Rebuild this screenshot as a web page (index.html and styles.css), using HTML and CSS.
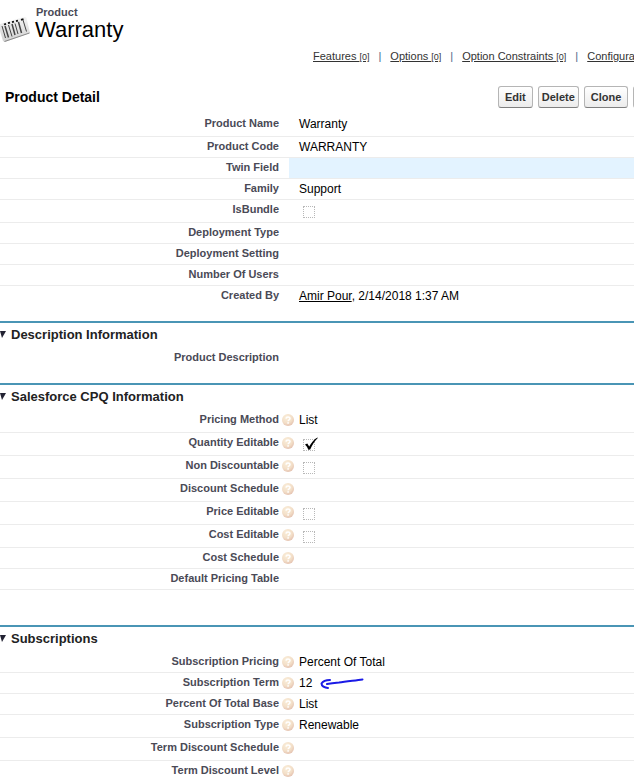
FILE: index.html
```html
<!DOCTYPE html>
<html lang="en">
<head>
<meta charset="utf-8">
<title>Product: Warranty</title>
<link rel="stylesheet" href="styles.css">
</head>
<body>
<svg class="defs" aria-hidden="true">
  <defs>
    <radialGradient id="help-fill" cx="0.4" cy="0.3" r="0.75">
      <stop offset="0" stop-color="#faeeda"/>
      <stop offset="0.6" stop-color="#f3dfc8"/>
      <stop offset="1" stop-color="#e3bfae"/>
    </radialGradient>
    <linearGradient id="tag-fill" x1="0" y1="0" x2="0" y2="1">
      <stop offset="0" stop-color="#f4f4f4"/>
      <stop offset="1" stop-color="#d0d0d0"/>
    </linearGradient>
  </defs>
  <symbol id="help" viewBox="0 0 12 12">
    <circle cx="6" cy="6" r="6" fill="url(#help-fill)"/>
    <path d="M4 4.6C4.1 2.5 8 2.5 8 4.6C8 5.9 6.1 5.8 6.1 7.3" fill="none" stroke="#fff" stroke-width="1.5"/>
    <rect x="5.3" y="8.2" width="1.6" height="1.5" fill="#fff"/>
  </symbol>
</svg>

<header class="page-head">
  <svg class="product-icon" viewBox="0 0 30 28" aria-hidden="true">
    <path d="M0 10L24 3Q26 2.500 26.500 4L30 19L5 28L3 27L0 17Z" fill="url(#tag-fill)"/>
    <path d="M4.500 27.500L29.500 19" stroke="#888" stroke-width="1"/>
    <path d="M2 12L5.500 24M8.500 11L12 22.500M15 9.500L18 20M23 6L26.500 17.500" stroke="#444" stroke-width="1"/>
    <path d="M5 12L8.500 23.500M12 10L15 21M18.500 8L21.500 19" stroke="#444" stroke-width="1.500"/>
    <path d="M4 10.500L6 9.800M8 9.200L10 8.700M12 8.200L14 7.700M16 7.200L18 6.700M21 5.800L23.500 5" stroke="#111" stroke-width="1.800"/>
  </svg>
  <div>
    <p class="kind">Product</p>
    <h1>Warranty</h1>
  </div>
</header>

<nav class="related" aria-label="Related lists">
  <a href="#">Features <span class="count">[0]</span></a><span class="bar">|</span>
  <a href="#">Options <span class="count">[0]</span></a><span class="bar">|</span>
  <a href="#">Option Constraints <span class="count">[0]</span></a><span class="bar">|</span>
  <a href="#">Configura</a>
</nav>

<main>
  <div class="toolbar">
    <h2>Product Detail</h2>
    <div class="actions">
      <button type="button">Edit</button>
      <button type="button" class="snug">Delete</button>
      <button type="button">Clone</button>
      <button type="button" aria-label="More actions"></button>
    </div>
  </div>

  <table class="fields">
    <tr class="tall"><th scope="row">Product Name</th><td>Warranty</td></tr>
    <tr><th scope="row">Product Code</th><td>WARRANTY</td></tr>
    <tr><th scope="row">Twin Field</th><td class="lit"></td></tr>
    <tr><th scope="row">Family</th><td>Support</td></tr>
    <tr class="tall"><th scope="row"><label for="bundle">IsBundle</label></th><td><span class="tick"><input type="checkbox" id="bundle" disabled></span></td></tr>
    <tr><th scope="row">Deployment Type</th><td></td></tr>
    <tr><th scope="row">Deployment Setting</th><td></td></tr>
    <tr><th scope="row">Number Of Users</th><td></td></tr>
    <tr class="last"><th scope="row">Created By</th><td><a href="#">Amir Pour</a>, 2/14/2018 1:37 AM</td></tr>
  </table>

  <section class="gap-medium">
    <h3><span class="twisty"></span>Description Information</h3>
    <table class="fields">
      <tr class="last"><th scope="row">Product Description</th><td></td></tr>
    </table>
  </section>

  <section class="gap-medium">
    <h3><span class="twisty"></span>Salesforce CPQ Information</h3>
    <table class="fields">
      <tr class="tall"><th scope="row">Pricing Method<svg class="help"><use href="#help"/></svg></th><td>List</td></tr>
      <tr class="tall"><th scope="row"><label for="quantity">Quantity Editable</label><svg class="help"><use href="#help"/></svg></th><td><span class="tick"><input type="checkbox" id="quantity" checked disabled><svg class="check" viewBox="0 0 14 14" aria-hidden="true"><path d="M1 7.500L3.300 6.500L5.200 9.500C7.500 5.500 10 2.200 13.500 0.500L13.800 1C10.500 4 8.200 8 6.200 12.500L4.300 12.700C3.500 10.500 2.500 9 1 7.500Z"/></svg></span></td></tr>
      <tr class="tall"><th scope="row"><label for="discount">Non Discountable</label><svg class="help"><use href="#help"/></svg></th><td><span class="tick"><input type="checkbox" id="discount" disabled></span></td></tr>
      <tr class="tall"><th scope="row">Discount Schedule<svg class="help"><use href="#help"/></svg></th><td></td></tr>
      <tr class="tall"><th scope="row"><label for="price">Price Editable</label><svg class="help"><use href="#help"/></svg></th><td><span class="tick"><input type="checkbox" id="price" disabled></span></td></tr>
      <tr class="tall"><th scope="row"><label for="cost">Cost Editable</label><svg class="help"><use href="#help"/></svg></th><td><span class="tick"><input type="checkbox" id="cost" disabled></span></td></tr>
      <tr><th scope="row">Cost Schedule<svg class="help"><use href="#help"/></svg></th><td></td></tr>
      <tr><th scope="row">Default Pricing Table</th><td></td></tr>
    </table>
  </section>

  <section class="gap-large">
    <h3><span class="twisty"></span>Subscriptions</h3>
    <table class="fields">
      <tr><th scope="row">Subscription Pricing<svg class="help"><use href="#help"/></svg></th><td>Percent Of Total</td></tr>
      <tr><th scope="row">Subscription Term<svg class="help"><use href="#help"/></svg></th><td><span class="marked">12<svg class="arrow" viewBox="0 0 44 14" aria-hidden="true"><path d="M42.500 2.500C35 3.500 26 4.500 19 5.500C14 6 10 6.500 7 7M10 3C7 3 3 4 1.500 6.500C1.500 9 4.500 11 8 11"/></svg></span></td></tr>
      <tr><th scope="row">Percent Of Total Base<svg class="help"><use href="#help"/></svg></th><td>List</td></tr>
      <tr class="tall"><th scope="row">Subscription Type<svg class="help"><use href="#help"/></svg></th><td>Renewable</td></tr>
      <tr class="tall"><th scope="row">Term Discount Schedule<svg class="help"><use href="#help"/></svg></th><td></td></tr>
      <tr class="last"><th scope="row">Term Discount Level<svg class="help"><use href="#help"/></svg></th><td></td></tr>
    </table>
  </section>
</main>
</body>
</html>
```
FILE: styles.css
```css
* { box-sizing: border-box; }

body {
  margin: 0;
  background: #fff;
  color: #000;
  font: 12px/14px "Liberation Sans", Arial, sans-serif;
}

h1, h2, h3, p { margin: 0; }

.defs { position: absolute; width: 0; height: 0; }

.page-head {
  display: flex;
  gap: 5px;
  padding-top: 6px;
}

.product-icon {
  width: 30px;
  height: 28px;
  margin-top: 8px;
}

.kind {
  padding-left: 1px;
  color: #4a4a56;
  font-size: 11px;
  font-weight: bold;
  line-height: 12px;
}

h1 {
  font-size: 22px;
  font-weight: normal;
  line-height: 24px;
}

.related {
  display: flex;
  margin: 6px 0 0 313px;
  overflow: hidden;
  font-size: 11px;
  line-height: 16px;
  white-space: nowrap;
}

.related a { color: #333; }

.count {
  font-size: 9px;
  line-height: 9px;
}

.bar {
  padding: 0 9px;
  color: #468;
}

.toolbar {
  display: flex;
  align-items: center;
  margin-top: 22px;
  padding-left: 5px;
  overflow: hidden;
}

h2 {
  width: 493px;
  flex: none;
  font-size: 14px;
  line-height: 22px;
}

.actions {
  display: flex;
  gap: 5px;
}

button {
  height: 22px;
  padding: 0 6px;
  border: 1px solid #b5b5b5;
  border-bottom-color: #7f7f7f;
  border-radius: 3px;
  background: linear-gradient(#fff, #ececec);
  color: #333;
  font: bold 11px/18px "Liberation Sans", Arial, sans-serif;
}

button.snug { padding: 0 3px; }

.fields {
  width: 100%;
  border-spacing: 0;
  table-layout: fixed;
}

.toolbar + .fields { margin-top: 6px; }

th, td {
  height: 21px;
  border-bottom: 1px solid #ececec;
  vertical-align: top;
}

.tall th, .tall td { height: 23px; }

.last th, .last td { border-bottom: 0; }

th {
  position: relative;
  width: 289px;
  padding: 2px 10px 0 0;
  color: #4a4a56;
  font-size: 11px;
  text-align: right;
}

td {
  padding: 3px 0 0 10px;
}

td a { color: #000; }

.lit { background: #e3f3ff; }

.help {
  position: absolute;
  top: 4px;
  right: -5px;
  width: 12px;
  height: 12px;
}

.tick {
  position: relative;
  display: block;
  padding: 3px 0 0 4px;
}

input {
  display: block;
  width: 12px;
  height: 12px;
  margin: 0;
  border: 1px dotted #b8b8b8;
  appearance: none;
}

.check {
  position: absolute;
  top: 1px;
  left: 5px;
  width: 14px;
  height: 14px;
}

section {
  border-top: 2px solid #4a95b5;
}

.gap-medium { margin-top: 14px; }

.gap-large { margin-top: 35px; }

h3 {
  display: flex;
  align-items: center;
  gap: 5px;
  height: 23px;
  margin-bottom: 2px;
  color: #222;
  font-size: 13px;
}

.twisty {
  border: solid transparent;
  border-width: 7px 4px 0 2px;
  border-top-color: #223;
}

.marked { position: relative; }

.arrow {
  position: absolute;
  top: 1px;
  left: 21px;
  width: 44px;
  height: 14px;
  fill: none;
  stroke: #1a1ae6;
  stroke-width: 2;
  stroke-linecap: round;
}
```
